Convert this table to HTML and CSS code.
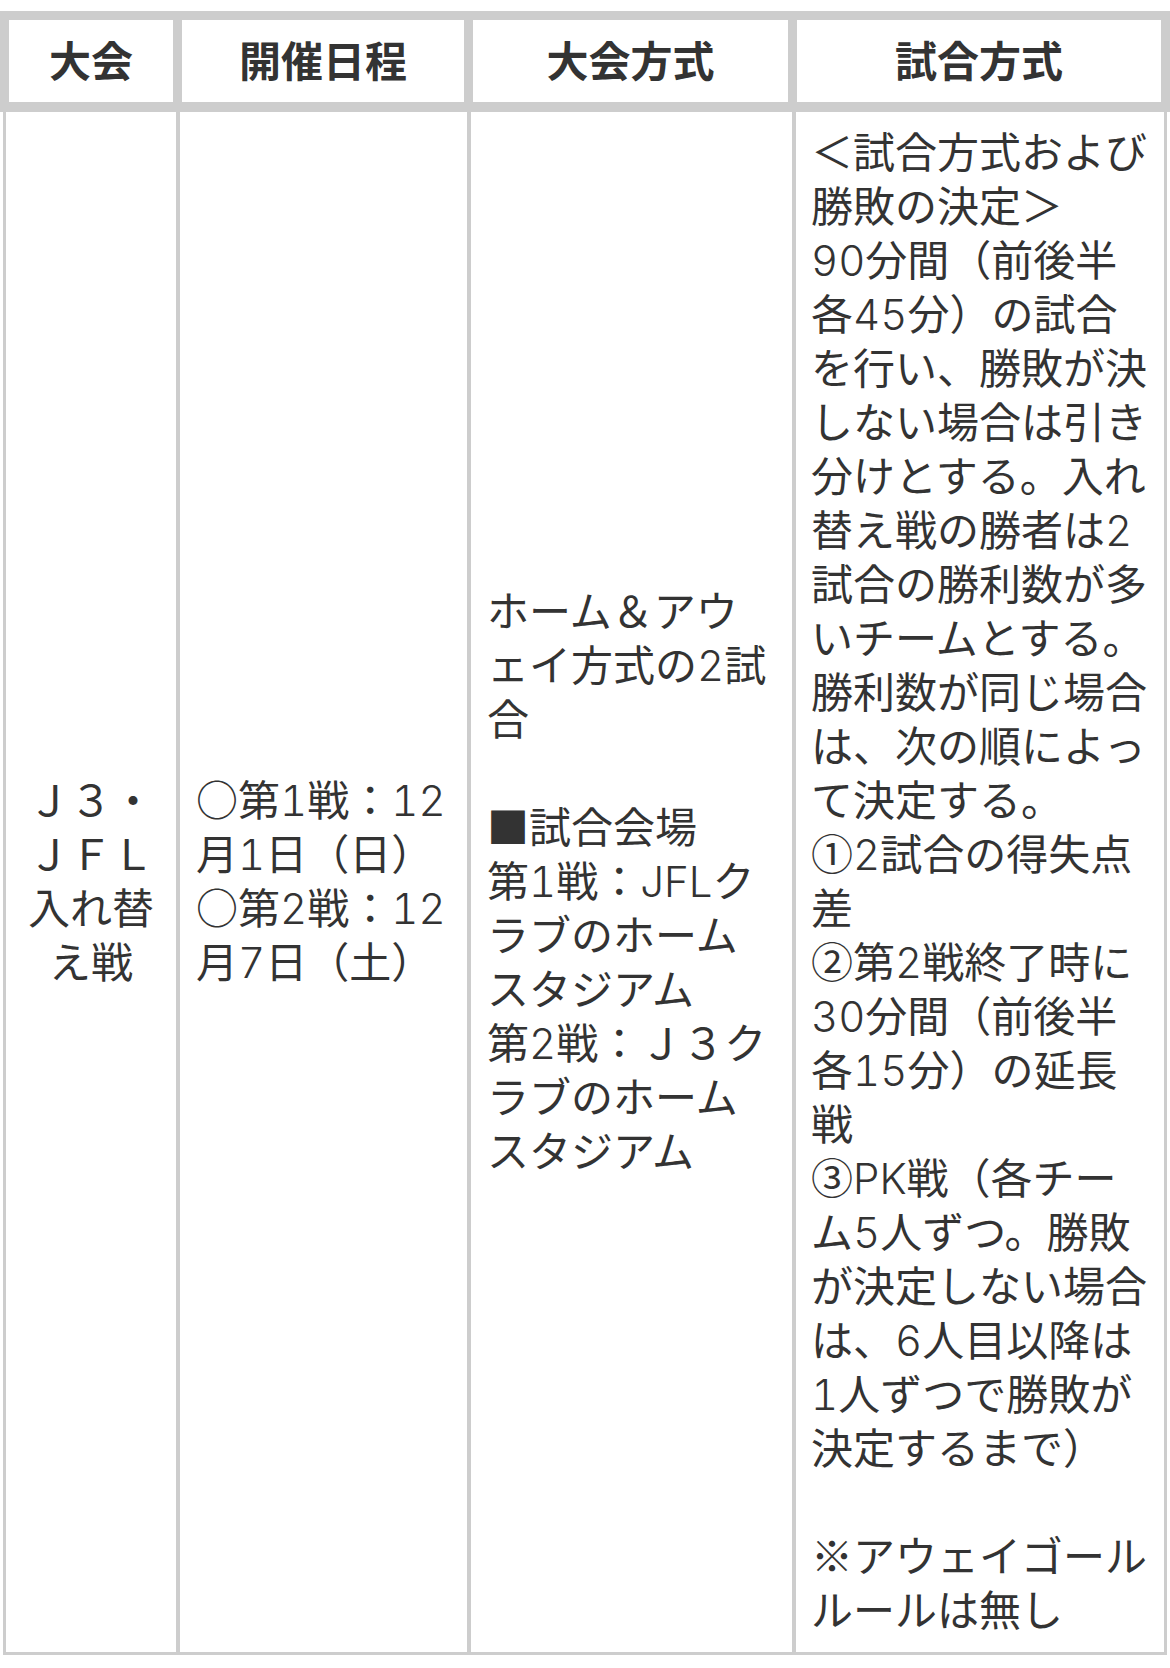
FILE: index.html
```html
<!DOCTYPE html>
<html lang="ja">
<head>
<meta charset="utf-8">
<title>J3・JFL入れ替え戦</title>
<link rel="stylesheet" href="styles.css">
</head>
<body>
<div class="table">
  <div class="thead">
    <div class="th">大会</div>
    <div class="th">開催日程</div>
    <div class="th">大会方式</div>
    <div class="th">試合方式</div>
  </div>
  <div class="tbody">
    <div class="td td-center"><div class="txt">Ｊ３・<br>ＪＦＬ<br>入れ替<br>え戦</div></div>
    <div class="td"><div class="txt">○第<span class="lat">1</span>戦：<span class="lat">12</span><br>月<span class="lat">1</span>日（日）<br>○第<span class="lat">2</span>戦：<span class="lat">12</span><br>月<span class="lat">7</span>日（土）</div></div>
    <div class="td"><div class="txt">ホーム＆アウ<br>ェイ方式の<span class="lat">2</span>試<br>合<br><br>■試合会場<br>第<span class="lat">1</span>戦：<span class="lat">JFL</span>ク<br>ラブのホーム<br>スタジアム<br>第<span class="lat">2</span>戦：Ｊ３ク<br>ラブのホーム<br>スタジアム</div></div>
    <div class="td td-top"><div class="txt">＜試合方式および<br>勝敗の決定＞<br><span class="lat">90</span>分間（前後半<br>各<span class="lat">45</span>分）の試合<br>を行い、勝敗が決<br>しない場合は引き<br>分けとする。入れ<br>替え戦の勝者は<span class="lat">2</span><br>試合の勝利数が多<br>いチームとする。<br>勝利数が同じ場合<br>は、次の順によっ<br>て決定する。<br>①<span class="lat">2</span>試合の得失点<br>差<br>②第<span class="lat">2</span>戦終了時に<br><span class="lat">30</span>分間（前後半<br>各<span class="lat">15</span>分）の延長<br>戦<br>③<span class="lat">PK</span>戦（各チー<br>ム<span class="lat">5</span>人ずつ。勝敗<br>が決定しない場合<br>は、<span class="lat">6</span>人目以降は<br><span class="lat">1</span>人ずつで勝敗が<br>決定するまで）<br><br>※アウェイゴール<br>ルールは無し</div></div>
  </div>
</div>
</body>
</html>
```

FILE: styles.css
```css
html, body {
  margin: 0;
  padding: 0;
  background: #ffffff;
}

body {
  font-family: "Noto Sans CJK JP", "Noto Sans", sans-serif;
  color: #333333;
}

.table {
  width: 1170px;
  margin-top: 11px;
}

.thead {
  display: grid;
  grid-template-columns: 164px 282px 315px 364px;
  column-gap: 9px;
  padding: 9px 9px 10px 9px;
  background: #cdcdcd;
}

.th {
  background: #ffffff;
  height: 78px;
  line-height: 78px;
  padding-bottom: 4px;
  text-align: center;
  font-size: 42px;
  font-weight: 700;
  color: #333333;
}

.tbody {
  display: grid;
  grid-template-columns: 170px 287px 321px 368px;
  column-gap: 4px;
  margin: 0 3px;
  padding: 0 3px 3px 3px;
  background: #cdcdcd;
}

.td {
  background: #ffffff;
  font-size: 42px;
  line-height: 54px;
  padding: 11px 4px 17px 16px;
  display: flex;
  flex-direction: column;
  justify-content: center;
  white-space: nowrap;
}

.lat {
  font-family: Inter, "Liberation Sans", sans-serif;
  font-weight: 350;
  font-variant-numeric: tabular-nums;
  line-height: 1;
}

.td-center {
  text-align: center;
  padding-left: 6px;
  padding-right: 6px;
}

.td-top {
  justify-content: flex-start;
  padding-left: 15px;
  padding-right: 2px;
}
```
